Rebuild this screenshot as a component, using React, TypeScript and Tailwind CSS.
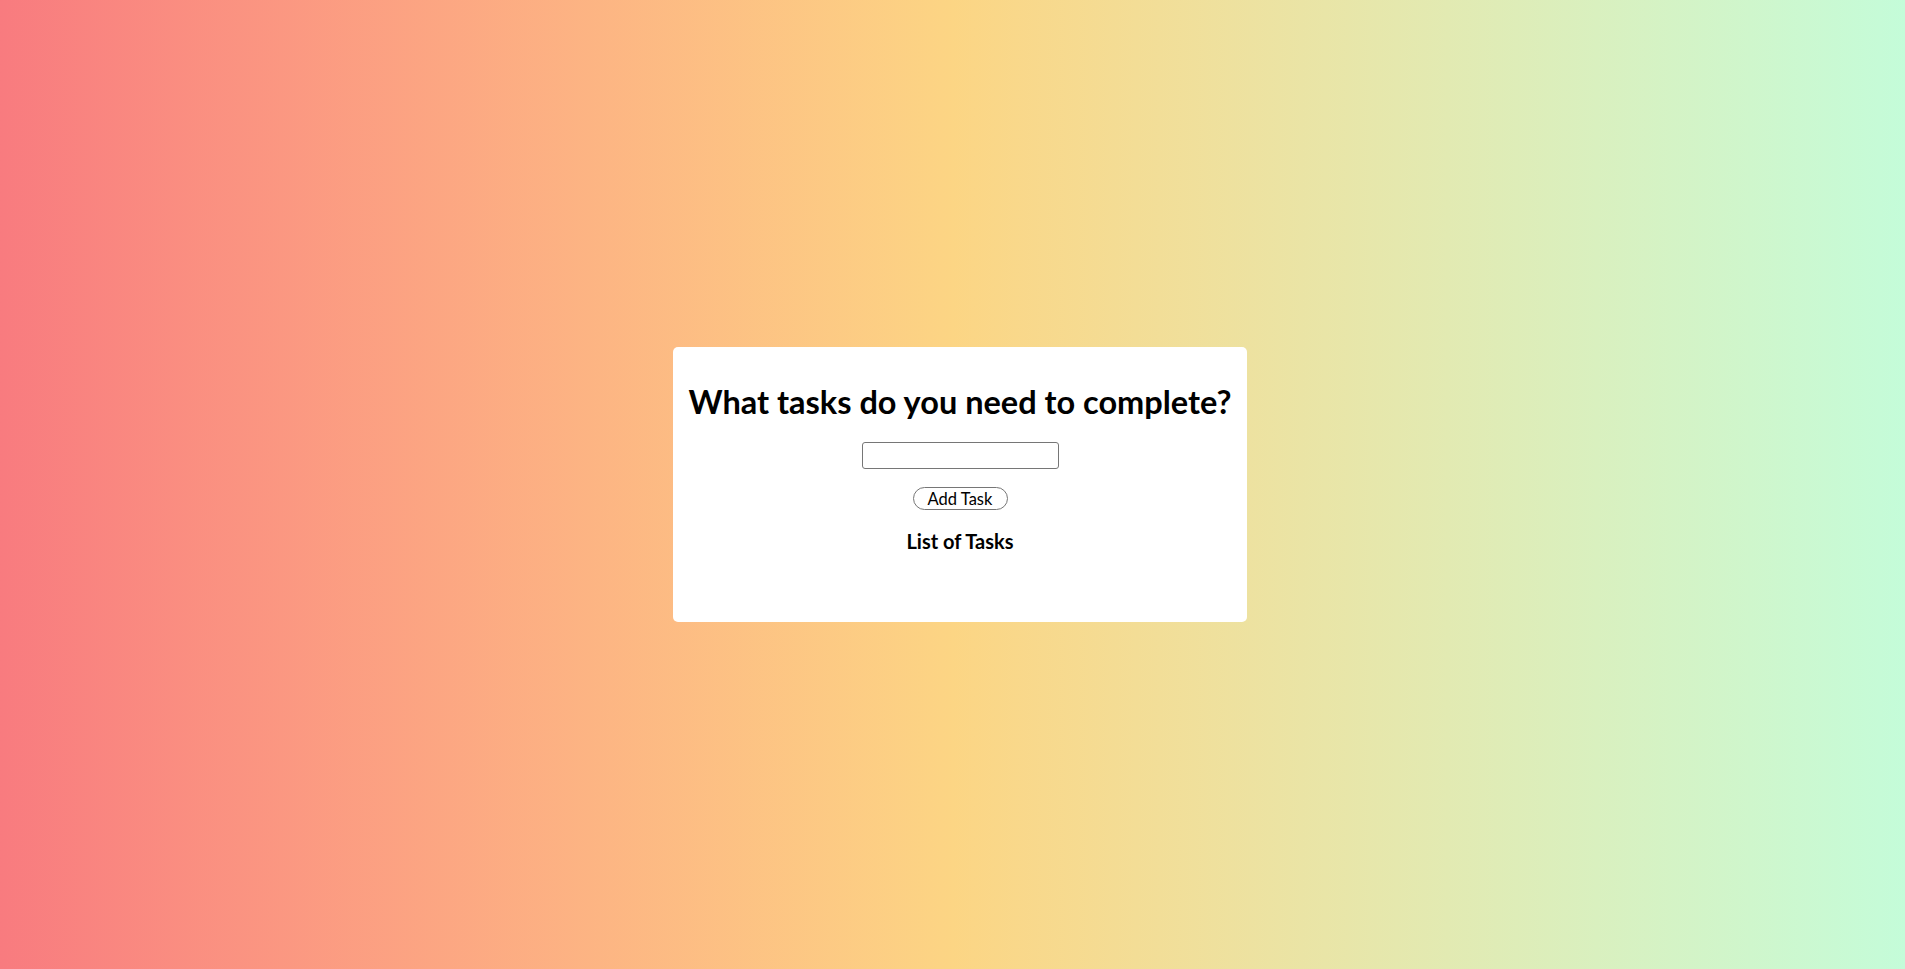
import React, { useState } from "react";

const App = () => {
  const [task, setTask] = useState("");
  const [tasks, setTasks] = useState<string[]>([]);

  const addTask = () => {
    if (!task.trim()) return;
    setTasks([...tasks, task.trim()]);
    setTask("");
  };

  return (
    <div className="flex h-screen w-full items-center justify-center bg-gradient-to-r from-[#f87b7f] via-[#fcd584] to-[#c4fcd9] pl-[15px] font-['Lato',sans-serif] text-black">
      <div className="flex w-[574px] flex-col items-center rounded-[5px] bg-white pt-[36px] pb-[69px]">
        <h1 className="text-[32.5px] font-bold leading-[38px]">
          What tasks do you need to complete?
        </h1>
        <input
          type="text"
          value={task}
          onChange={(e) => setTask(e.target.value)}
          className="mt-[21px] h-[27px] w-[197px] rounded-[3px] border border-[#767676] px-1 text-[13px] outline-none"
        />
        <button
          onClick={addTask}
          className="mt-[18px] flex h-[23px] w-[95px] items-center justify-center rounded-full border border-[#767676] bg-white pt-[1px] text-[16.5px] leading-[19px]"
        >
          Add Task
        </button>
        <h3 className="mt-[19px] text-[20px] font-bold leading-[24px]">
          List of Tasks
        </h3>
        {tasks.length > 0 ? (
          <ul className="mt-2">
            {tasks.map((t, i) => (
              <li key={i} className="text-[16px]">
                {t}
              </li>
            ))}
          </ul>
        ) : null}
      </div>
    </div>
  );
};

export default App;
